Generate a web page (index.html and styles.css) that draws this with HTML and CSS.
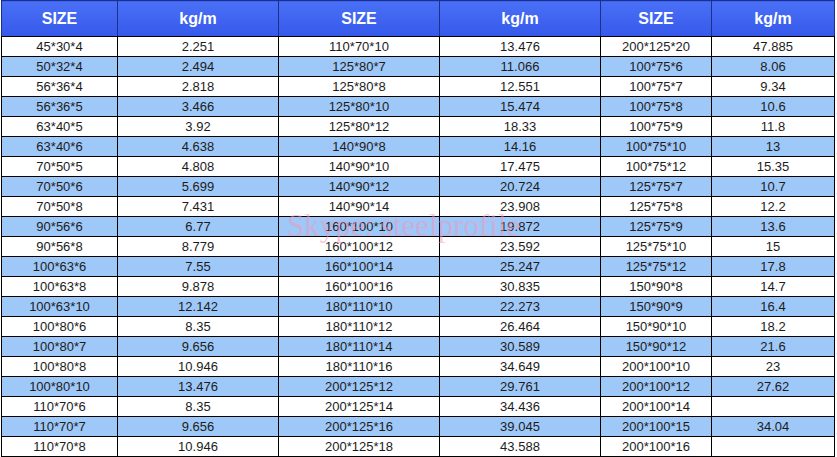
FILE: index.html
```html
<!DOCTYPE html>
<html>
<head>
<meta charset="utf-8">
<link rel="stylesheet" href="styles.css">
</head>
<body>
<div class="wrap">
<table class="spec">
<colgroup>
<col class="c1"><col class="c2"><col class="c3"><col class="c4"><col class="c5"><col class="c6">
</colgroup>
<thead>
<tr><th>SIZE</th><th>kg/m</th><th>SIZE</th><th>kg/m</th><th>SIZE</th><th>kg/m</th></tr>
</thead>
<tbody>
<tr><td>45*30*4</td><td>2.251</td><td>110*70*10</td><td>13.476</td><td>200*125*20</td><td>47.885</td></tr>
<tr><td>50*32*4</td><td>2.494</td><td>125*80*7</td><td>11.066</td><td>100*75*6</td><td>8.06</td></tr>
<tr><td>56*36*4</td><td>2.818</td><td>125*80*8</td><td>12.551</td><td>100*75*7</td><td>9.34</td></tr>
<tr><td>56*36*5</td><td>3.466</td><td>125*80*10</td><td>15.474</td><td>100*75*8</td><td>10.6</td></tr>
<tr><td>63*40*5</td><td>3.92</td><td>125*80*12</td><td>18.33</td><td>100*75*9</td><td>11.8</td></tr>
<tr><td>63*40*6</td><td>4.638</td><td>140*90*8</td><td>14.16</td><td>100*75*10</td><td>13</td></tr>
<tr><td>70*50*5</td><td>4.808</td><td>140*90*10</td><td>17.475</td><td>100*75*12</td><td>15.35</td></tr>
<tr><td>70*50*6</td><td>5.699</td><td>140*90*12</td><td>20.724</td><td>125*75*7</td><td>10.7</td></tr>
<tr><td>70*50*8</td><td>7.431</td><td>140*90*14</td><td>23.908</td><td>125*75*8</td><td>12.2</td></tr>
<tr><td>90*56*6</td><td>6.77</td><td>160*100*10</td><td>19.872</td><td>125*75*9</td><td>13.6</td></tr>
<tr><td>90*56*8</td><td>8.779</td><td>160*100*12</td><td>23.592</td><td>125*75*10</td><td>15</td></tr>
<tr><td>100*63*6</td><td>7.55</td><td>160*100*14</td><td>25.247</td><td>125*75*12</td><td>17.8</td></tr>
<tr><td>100*63*8</td><td>9.878</td><td>160*100*16</td><td>30.835</td><td>150*90*8</td><td>14.7</td></tr>
<tr><td>100*63*10</td><td>12.142</td><td>180*110*10</td><td>22.273</td><td>150*90*9</td><td>16.4</td></tr>
<tr><td>100*80*6</td><td>8.35</td><td>180*110*12</td><td>26.464</td><td>150*90*10</td><td>18.2</td></tr>
<tr><td>100*80*7</td><td>9.656</td><td>180*110*14</td><td>30.589</td><td>150*90*12</td><td>21.6</td></tr>
<tr><td>100*80*8</td><td>10.946</td><td>180*110*16</td><td>34.649</td><td>200*100*10</td><td>23</td></tr>
<tr><td>100*80*10</td><td>13.476</td><td>200*125*12</td><td>29.761</td><td>200*100*12</td><td>27.62</td></tr>
<tr><td>110*70*6</td><td>8.35</td><td>200*125*14</td><td>34.436</td><td>200*100*14</td><td></td></tr>
<tr><td>110*70*7</td><td>9.656</td><td>200*125*16</td><td>39.045</td><td>200*100*15</td><td>34.04</td></tr>
<tr><td>110*70*8</td><td>10.946</td><td>200*125*18</td><td>43.588</td><td>200*100*16</td><td></td></tr>
</tbody>
</table>
<div class="watermark">Skype: steelprofile</div>
</div>
</body>
</html>
```

FILE: styles.css
```css
html, body {
  margin: 0;
  padding: 0;
  background: #ffffff;
}
.wrap {
  position: relative;
  width: 837px;
  height: 457px;
  padding: 0 0 0 1px;
  box-sizing: border-box;
}
.spec {
  border-collapse: collapse;
  table-layout: fixed;
  width: 833px;
  font-family: "Liberation Sans", Arial, sans-serif;
}
.c1 { width: 116px; }
.c2 { width: 161px; }
.c3 { width: 161px; }
.c4 { width: 161px; }
.c5 { width: 111px; }
.c6 { width: 123px; }
.spec th {
  height: 35px;
  padding: 0;
  background: linear-gradient(#4a70f6, #3659ea);
  color: #ffffff;
  font-size: 16px;
  font-weight: bold;
  text-align: center;
  border: 1px solid #1b2f8c;
  border-bottom-color: #000000;
}
.spec td {
  height: 19px;
  padding: 0;
  font-size: 13px;
  line-height: 19px;
  color: #1c1c1c;
  text-align: center;
  border: 1px solid #000000;
  white-space: nowrap;
}
.spec tbody tr:nth-child(even) td {
  background: #9ec8f8;
}
.watermark {
  position: absolute;
  left: 287px;
  top: 208px;
  font-family: "Liberation Serif", "Times New Roman", serif;
  font-size: 31px;
  color: rgba(245, 150, 185, 0.5);
  white-space: nowrap;
  pointer-events: none;
}
```
